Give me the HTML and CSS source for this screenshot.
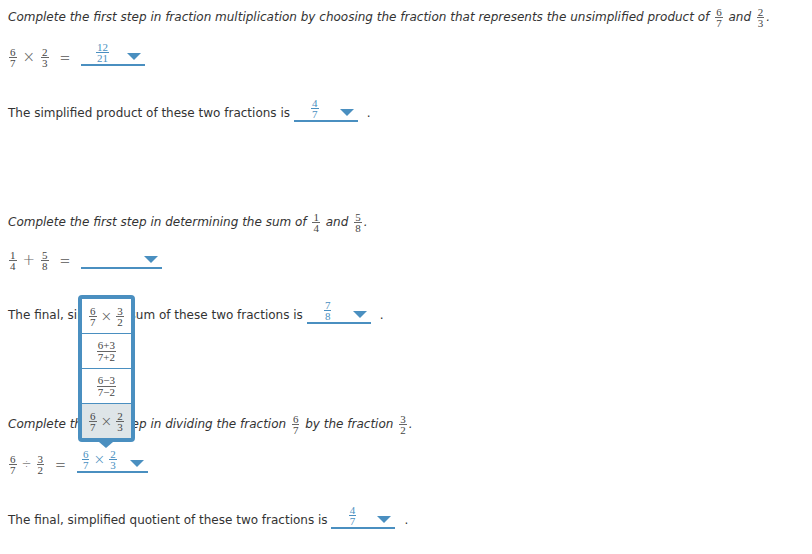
FILE: index.html
```html
<!DOCTYPE html>
<html>
<head>
<meta charset="utf-8">
<link rel="stylesheet" href="styles.css">
</head>
<body>
<div class="page">
  <section class="section">
    <div class="row prompt">Complete the first step in fraction multiplication by choosing the fraction that represents the unsimplified product of <span class="frac"><span class="num">6</span><span class="den">7</span></span> and <span class="frac"><span class="num">2</span><span class="den">3</span></span>.</div>
    <div class="row equation">
      <span class="frac"><span class="num">6</span><span class="den">7</span></span>
      <span class="op">×</span>
      <span class="frac"><span class="num">2</span><span class="den">3</span></span>
      <span class="eq">=</span>
      <span class="dropdown"><span class="value"><span class="frac"><span class="num">12</span><span class="den">21</span></span></span><span class="caret"></span></span>
    </div>
    <div class="row final">The simplified product of these two fractions is <span class="dropdown"><span class="value"><span class="frac"><span class="num">4</span><span class="den">7</span></span></span><span class="caret"></span></span><span class="dot">.</span></div>
  </section>

  <section class="section section-tight">
    <div class="row prompt">Complete the first step in determining the sum of <span class="frac"><span class="num">1</span><span class="den">4</span></span> and <span class="frac"><span class="num">5</span><span class="den">8</span></span>.</div>
    <div class="row equation">
      <span class="frac"><span class="num">1</span><span class="den">4</span></span>
      <span class="op">+</span>
      <span class="frac"><span class="num">5</span><span class="den">8</span></span>
      <span class="eq">=</span>
      <span class="dropdown dropdown-empty"><span class="value"></span><span class="caret"></span></span>
    </div>
    <div class="row final">The final, simplified sum of these two fractions is <span class="dropdown"><span class="value"><span class="frac"><span class="num">7</span><span class="den">8</span></span></span><span class="caret"></span></span><span class="dot">.</span></div>
  </section>

  <section class="section">
    <div class="row prompt">Complete the first step in dividing the fraction <span class="frac"><span class="num">6</span><span class="den">7</span></span> by the fraction <span class="frac"><span class="num">3</span><span class="den">2</span></span>.</div>
    <div class="row equation">
      <span class="frac"><span class="num">6</span><span class="den">7</span></span>
      <span class="op op-div">÷</span>
      <span class="frac"><span class="num">3</span><span class="den">2</span></span>
      <span class="eq">=</span>
      <span class="dropdown dropdown-open">
        <span class="value"><span class="frac"><span class="num">6</span><span class="den">7</span></span><span class="op op-small">×</span><span class="frac"><span class="num">2</span><span class="den">3</span></span></span><span class="caret"></span>
        <span class="menu">
          <span class="option"><span class="frac"><span class="num">6</span><span class="den">7</span></span><span class="op op-small">×</span><span class="frac"><span class="num">3</span><span class="den">2</span></span></span>
          <span class="option"><span class="frac frac-wide"><span class="num">6+3</span><span class="den">7+2</span></span></span>
          <span class="option"><span class="frac frac-wide"><span class="num">6−3</span><span class="den">7−2</span></span></span>
          <span class="option option-selected"><span class="frac"><span class="num">6</span><span class="den">7</span></span><span class="op op-small">×</span><span class="frac"><span class="num">2</span><span class="den">3</span></span></span>
        </span>
      </span>
    </div>
    <div class="row final">The final, simplified quotient of these two fractions is <span class="dropdown"><span class="value"><span class="frac"><span class="num">4</span><span class="den">7</span></span></span><span class="caret"></span></span><span class="dot">.</span></div>
  </section>
</div>
</body>
</html>
```

FILE: styles.css
```css
html, body {
  margin: 0;
  padding: 0;
  background: #ffffff;
}

.page {
  padding: 3px 8px 0 8px;
  font-family: "DejaVu Sans", Verdana, sans-serif;
  font-size: 12px;
  color: #333333;
}

.section {
  margin-bottom: 81px;
}

.section:last-child {
  margin-bottom: 0;
}

.row {
  height: 28px;
  display: flex;
  align-items: center;
  white-space: pre;
}

.prompt {
  font-style: italic;
  margin-bottom: 12px;
}

.equation {
  margin-bottom: 28px;
  white-space: normal;
}

.section-tight .prompt {
  margin-bottom: 10px;
}

.section-tight .equation {
  margin-bottom: 27px;
}

.frac {
  display: inline-flex;
  flex-direction: column;
  align-items: center;
  font-family: "Liberation Serif", "Times New Roman", serif;
  font-style: normal;
  font-size: 11px;
  line-height: 8px;
  color: #444444;
  padding: 0 2px;
}

.frac .num {
  padding: 0 1px 1px;
}

.frac .den {
  border-top: 1px solid #666666;
  padding: 1px 1px 0;
  align-self: stretch;
  text-align: center;
}

.frac-wide {
  font-size: 11px;
  line-height: 9px;
}

.frac-wide .num,
.frac-wide .den {
  padding-left: 1px;
  padding-right: 1px;
}

.equation .frac {
  padding: 0 1px;
}

.op {
  font-family: "DejaVu Sans", sans-serif;
  font-size: 15px;
  font-weight: 300;
  color: #666666;
  margin: 0 5px;
}

.op-div {
  font-size: 12px;
  color: #444444;
  margin: 0 4px;
}

.eq {
  font-size: 13px;
  color: #777777;
  margin: 0 11px 0 10px;
}

.dropdown {
  position: relative;
  display: inline-flex;
  align-items: flex-end;
  height: 18px;
  padding: 0 4px 2px;
  border-bottom: 2px solid #4a8fc0;
  box-sizing: border-box;
}

.dropdown .frac {
  color: #4a8fc0;
}

.dropdown .frac .den {
  border-top-color: #4a8fc0;
}

.dropdown .op {
  color: #4a8fc0;
}

.value {
  display: inline-flex;
  align-items: flex-end;
  justify-content: center;
  min-width: 34px;
}

.dropdown-empty .value {
  min-width: 51px;
}

.caret {
  width: 0;
  height: 0;
  margin-left: 8px;
  margin-bottom: 2px;
  border-left: 7px solid transparent;
  border-right: 7px solid transparent;
  border-top: 7px solid #4a8fc0;
}

.dropdown-open .caret {
  margin-left: 12px;
}

.op-small {
  font-size: 14px;
  margin: 0 3px 2px;
}

.option .op-small {
  margin-bottom: 0;
}

.dot {
  margin-left: 9px;
}

.menu {
  position: absolute;
  left: 1px;
  bottom: 29px;
  width: 57px;
  box-sizing: border-box;
  border: 4px solid #4a8fc0;
  border-radius: 4px;
  background: #4a8fc0;
  display: flex;
  flex-direction: column;
  gap: 1px;
}

.menu::after {
  content: "";
  position: absolute;
  left: 50%;
  bottom: -10px;
  margin-left: -7px;
  border-left: 7px solid transparent;
  border-right: 7px solid transparent;
  border-top: 6px solid #4a8fc0;
}

.option {
  height: 34px;
  background: #ffffff;
  display: flex;
  align-items: center;
  justify-content: center;
}

.option .frac {
  color: #444444;
}

.option .frac .den {
  border-top-color: #666666;
}

.option .op {
  color: #555555;
}

.option-selected {
  background: #dee5e8;
}
```
